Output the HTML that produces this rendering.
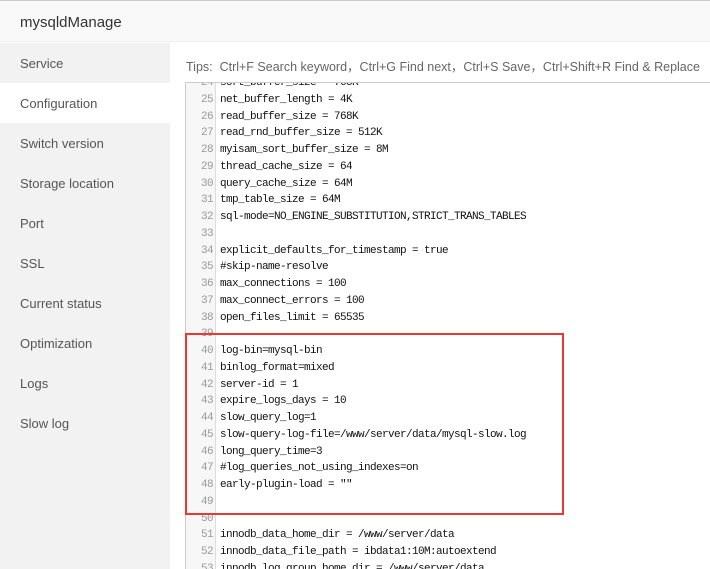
<!DOCTYPE html>
<html><head><style>
html,body{margin:0;width:710px;height:569px;overflow:hidden}
body{font-family:"Liberation Sans","Noto Sans CJK SC",sans-serif;background:#fff;position:relative}
.hdr{position:absolute;left:0;top:0;width:710px;height:42px;background:#f9f9f9;border-top:1px solid #ccc;box-sizing:border-box;border-bottom:1px solid #eee}
.hdr span{position:absolute;left:20px;top:13px;font-size:15px;color:#333}
.side{position:absolute;left:0;top:43px;width:170px;height:526px;background:#f2f2f2}
.side div{height:40px;line-height:41px;padding-left:20px;font-size:13px;color:#555}
.side div.a{background:#fff;color:#555}
.tips{position:absolute;left:186px;top:56px;font-size:12.5px;color:#666;white-space:nowrap}
.ed{position:absolute;left:185px;top:82px;width:530px;height:490px;border:1px solid #ccc;overflow:hidden;background:#fff}
.g{position:absolute;left:0;top:0;width:29px;height:100%;background:#f7f7f7;border-right:1px solid #ddd}
.code{position:absolute;left:0;top:-8px;font-family:"Liberation Mono",monospace;font-size:11px;letter-spacing:-0.6px;color:#111}
.l{height:16.75px;line-height:16.75px;white-space:pre;position:relative}
.l b{font-weight:normal;color:#999;display:inline-block;width:27px;text-align:right;margin-right:7px}
.red{position:absolute;left:185px;top:333px;width:375px;height:178px;border:2px solid #f03535}
</style></head><body>
<div class="hdr"><span>mysqldManage</span></div>
<div class="side">
<div>Service</div><div class="a">Configuration</div><div>Switch version</div><div>Storage location</div><div>Port</div><div>SSL</div><div>Current status</div><div>Optimization</div><div>Logs</div><div>Slow log</div>
</div>
<div class="tips">Tips:&nbsp; Ctrl+F Search keyword，Ctrl+G Find next，Ctrl+S Save，Ctrl+Shift+R Find &amp; Replace</div>
<div class="ed"><div class="g"></div><div class="code">
<div class="l"><b>24</b>sort_buffer_size = 768K</div>
<div class="l"><b>25</b>net_buffer_length = 4K</div>
<div class="l"><b>26</b>read_buffer_size = 768K</div>
<div class="l"><b>27</b>read_rnd_buffer_size = 512K</div>
<div class="l"><b>28</b>myisam_sort_buffer_size = 8M</div>
<div class="l"><b>29</b>thread_cache_size = 64</div>
<div class="l"><b>30</b>query_cache_size = 64M</div>
<div class="l"><b>31</b>tmp_table_size = 64M</div>
<div class="l"><b>32</b>sql-mode=NO_ENGINE_SUBSTITUTION,STRICT_TRANS_TABLES</div>
<div class="l"><b>33</b></div>
<div class="l"><b>34</b>explicit_defaults_for_timestamp = true</div>
<div class="l"><b>35</b>#skip-name-resolve</div>
<div class="l"><b>36</b>max_connections = 100</div>
<div class="l"><b>37</b>max_connect_errors = 100</div>
<div class="l"><b>38</b>open_files_limit = 65535</div>
<div class="l"><b>39</b></div>
<div class="l"><b>40</b>log-bin=mysql-bin</div>
<div class="l"><b>41</b>binlog_format=mixed</div>
<div class="l"><b>42</b>server-id = 1</div>
<div class="l"><b>43</b>expire_logs_days = 10</div>
<div class="l"><b>44</b>slow_query_log=1</div>
<div class="l"><b>45</b>slow-query-log-file=/www/server/data/mysql-slow.log</div>
<div class="l"><b>46</b>long_query_time=3</div>
<div class="l"><b>47</b>#log_queries_not_using_indexes=on</div>
<div class="l"><b>48</b>early-plugin-load = ""</div>
<div class="l"><b>49</b></div>
<div class="l"><b>50</b></div>
<div class="l"><b>51</b>innodb_data_home_dir = /www/server/data</div>
<div class="l"><b>52</b>innodb_data_file_path = ibdata1:10M:autoextend</div>
<div class="l"><b>53</b>innodb_log_group_home_dir = /www/server/data</div>
</div></div>
<div class="red"></div>
</body></html>
